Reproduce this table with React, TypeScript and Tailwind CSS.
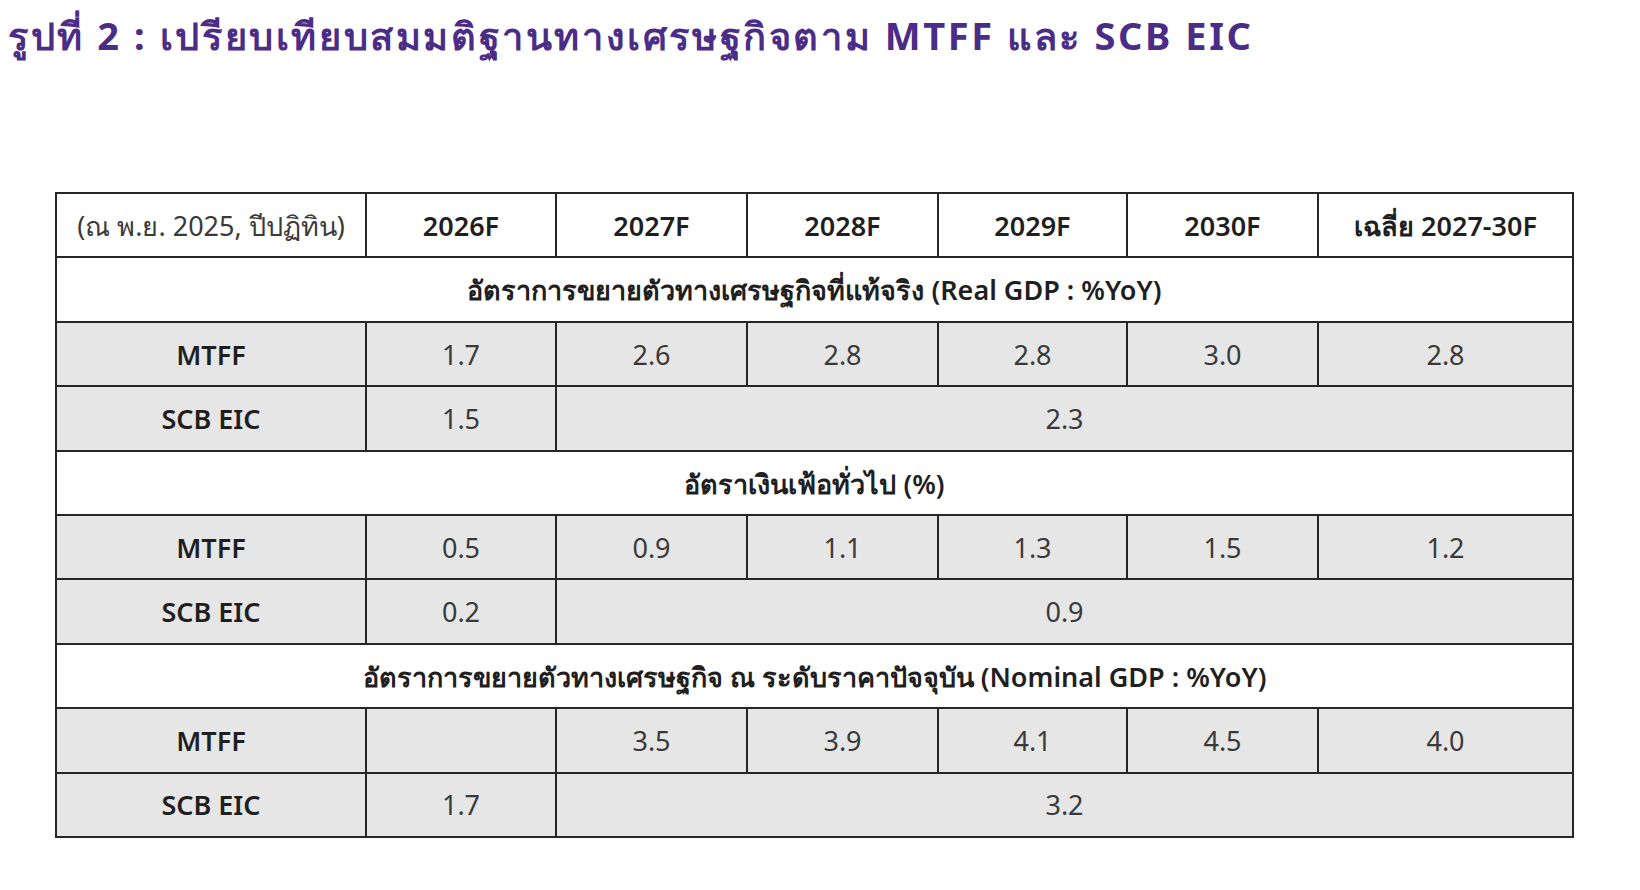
const years = ['2026F', '2027F', '2028F', '2029F', '2030F', 'เฉลี่ย 2027-30F'];

type Section = {
  title: string;
  mtff: string[];
  eicFirst: string;
  eicRest: string;
};

const sections: Section[] = [
  {
    title: 'อัตราการขยายตัวทางเศรษฐกิจที่แท้จริง (Real GDP : %YoY)',
    mtff: ['1.7', '2.6', '2.8', '2.8', '3.0', '2.8'],
    eicFirst: '1.5',
    eicRest: '2.3',
  },
  {
    title: 'อัตราเงินเฟ้อทั่วไป (%)',
    mtff: ['0.5', '0.9', '1.1', '1.3', '1.5', '1.2'],
    eicFirst: '0.2',
    eicRest: '0.9',
  },
  {
    title: 'อัตราการขยายตัวทางเศรษฐกิจ ณ ระดับราคาปัจจุบัน (Nominal GDP : %YoY)',
    mtff: ['', '3.5', '3.9', '4.1', '4.5', '4.0'],
    eicFirst: '1.7',
    eicRest: '3.2',
  },
];

const cell = 'border-2 border-[#262626] h-[64.4px] p-0 pt-[2px] text-center align-middle';

export default function App() {
  return (
    <div
      className="w-[1640px] h-[890px] bg-white overflow-hidden"
      style={{ fontFamily: '"Noto Sans", "Open Sans", "DejaVu Sans", sans-serif' }}
    >
      <h1 className="pl-[8px] pt-[10px] text-[38px] leading-[50px] font-bold text-[#4b2c87] tracking-[2.6px] whitespace-nowrap">
        รูปที่ 2 : เปรียบเทียบสมมติฐานทางเศรษฐกิจตาม MTFF และ SCB EIC
      </h1>

      <div className="pl-[55px] pt-[132px]">
        <table className="border-collapse w-[1517px] table-fixed text-[27px] text-[#2a2a2a]">
          <colgroup>
            <col className="w-[310px]" />
            <col className="w-[190px]" />
            <col className="w-[191px]" />
            <col className="w-[191px]" />
            <col className="w-[189px]" />
            <col className="w-[191px]" />
            <col className="w-[255px]" />
          </colgroup>
          <thead>
            <tr className="bg-white">
              <th className={`${cell} font-normal text-[#3a3a3a]`}>(ณ พ.ย. 2025, ปีปฏิทิน)</th>
              {years.map((y) => (
                <th key={y} className={`${cell} font-semibold text-[#1f1f1f]`}>
                  {y}
                </th>
              ))}
            </tr>
          </thead>
          <tbody>
            {sections.map((s) => (
              <Rows key={s.title} s={s} />
            ))}
          </tbody>
        </table>
      </div>
    </div>
  );
}

function Rows({ s }: { s: Section }) {
  return (
    <>
      <tr className="bg-white">
        <td colSpan={7} className={`${cell} font-semibold text-[#1f1f1f]`}>
          {s.title}
        </td>
      </tr>
      <tr className="bg-[#e6e6e6]">
        <td className={`${cell} font-semibold text-[#1f1f1f]`}>MTFF</td>
        {s.mtff.map((v, i) => (
          <td key={i} className={`${cell} text-[#3a3a3a]`}>
            {v}
          </td>
        ))}
      </tr>
      <tr className="bg-[#e6e6e6]">
        <td className={`${cell} font-semibold text-[#1f1f1f]`}>SCB EIC</td>
        <td className={`${cell} text-[#3a3a3a]`}>{s.eicFirst}</td>
        <td colSpan={5} className={`${cell} text-[#3a3a3a]`}>
          {s.eicRest}
        </td>
      </tr>
    </>
  );
}
